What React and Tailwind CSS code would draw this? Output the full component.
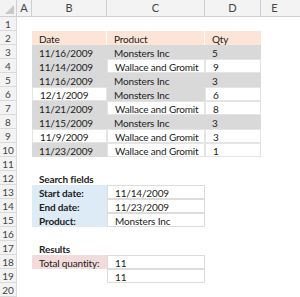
import React from "react";

const G = "bg-[#d9d9d9]";
const W = "bg-white border border-[#e4e4e4]";

const table = [
  ["11/16/2009", G, "Monsters Inc", G, "5", G],
  ["11/14/2009", G, "Wallace and Gromit", W, "9", W],
  ["11/16/2009", G, "Monsters Inc", G, "3", G],
  ["12/1/2009", W, "Monsters Inc", G, "6", W],
  ["11/21/2009", G, "Wallace and Gromit", W, "8", W],
  ["11/15/2009", G, "Monsters Inc", G, "3", G],
  ["11/9/2009", W, "Wallace and Gromit", W, "3", W],
  ["11/23/2009", G, "Wallace and Gromit", W, "1", W],
];

function Cell({ className = "", children }) {
  return (
    <div className={"h-[14px] flex items-center pl-[7px] pt-[1px] whitespace-nowrap leading-none tracking-[-0.15px] " + className}>
      {children}
    </div>
  );
}

function RowHead({ n }) {
  return (
    <div className="h-[14px] bg-[#f3f3f3] border-r border-b border-[#dadada] flex items-center justify-center text-[10px] text-[#444] leading-none">
      {n}
    </div>
  );
}

export default function App() {
  const rows = [];
  const pushRow = (n, b, c, d) => {
    rows.push(
      <React.Fragment key={n}>
        <RowHead n={n} />
        <div className="h-[14px]" />
        {b}
        {c}
        {d}
        <div className="h-[14px]" />
      </React.Fragment>
    );
  };
  pushRow(1, <Cell />, <Cell />, <Cell />);
  pushRow(
    2,
    <Cell className="bg-[#fce4d6] border-r border-white">Date</Cell>,
    <Cell className="bg-[#fce4d6] border-r border-white">Product</Cell>,
    <Cell className="bg-[#fce4d6]">Qty</Cell>
  );
  table.forEach((r, i) => {
    pushRow(
      i + 3,
      <Cell className={r[1]}>{r[0]}</Cell>,
      <Cell className={r[3]}>{r[2]}</Cell>,
      <Cell className={r[5]}>{r[4]}</Cell>
    );
  });
  pushRow(11, <Cell />, <Cell />, <Cell />);
  pushRow(12, <Cell className="font-bold">Search fields</Cell>, <Cell />, <Cell />);
  pushRow(13, <Cell className="font-bold bg-[#ddebf7]">Start date:</Cell>, <Cell className="border border-[#dcdcdc]">11/14/2009</Cell>, <Cell />);
  pushRow(14, <Cell className="font-bold bg-[#ddebf7]">End date:</Cell>, <Cell className="border border-[#dcdcdc]">11/23/2009</Cell>, <Cell />);
  pushRow(15, <Cell className="font-bold bg-[#ddebf7]">Product:</Cell>, <Cell className="border border-[#dcdcdc]">Monsters Inc</Cell>, <Cell />);
  pushRow(16, <Cell />, <Cell />, <Cell />);
  pushRow(17, <Cell className="font-bold">Results</Cell>, <Cell />, <Cell />);
  pushRow(18, <Cell className="bg-[#f2dcdb]">Total quantity:</Cell>, <Cell className="border border-[#dcdcdc]">11</Cell>, <Cell />);
  pushRow(19, <Cell />, <Cell className="border border-[#dcdcdc]">11</Cell>, <Cell />);
  pushRow(20, <Cell />, <Cell />, <Cell />);

  return (
    <div className="w-[300px] h-[297px] overflow-hidden bg-white text-[10px] text-[#222]" style={{ fontFamily: "Lato, 'Open Sans', sans-serif" }}>
      <div className="grid grid-cols-[17px_15px_75px_98px_56px_1fr]">
        <div className="h-[17px] bg-[#f3f3f3] border-r border-b border-[#cfcfcf] relative">
          <div className="absolute right-[2px] bottom-[2px] w-0 h-0 border-l-[9px] border-l-transparent border-b-[9px] border-b-[#c8c8c8]" />
        </div>
        <div className="h-[17px] bg-[#f3f3f3] border-r border-b border-[#cfcfcf] flex items-center justify-center text-[11px] text-[#444]">A</div>
        <div className="h-[17px] bg-[#f3f3f3] border-r border-b border-[#cfcfcf] flex items-center justify-center text-[11px] text-[#444]">B</div>
        <div className="h-[17px] bg-[#f3f3f3] border-r border-b border-[#cfcfcf] flex items-center justify-center text-[11px] text-[#444]">C</div>
        <div className="h-[17px] bg-[#f3f3f3] border-r border-b border-[#cfcfcf] flex items-center justify-center text-[11px] text-[#444]">D</div>
        <div className="h-[17px] bg-[#f3f3f3] border-b border-[#cfcfcf] flex items-center justify-center text-[11px] text-[#444] pr-[12px]">E</div>
        {rows}
      </div>
    </div>
  );
}
